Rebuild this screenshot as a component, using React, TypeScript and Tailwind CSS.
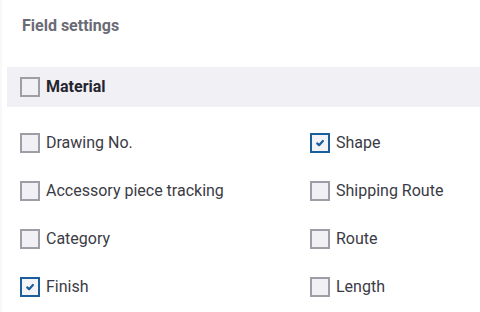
import React from "react";

type Item = { label: string; checked?: boolean };

const left: Item[] = [
  { label: "Drawing No." },
  { label: "Accessory piece tracking" },
  { label: "Category" },
  { label: "Finish", checked: true },
];

const right: Item[] = [
  { label: "Shape", checked: true },
  { label: "Shipping Route" },
  { label: "Route" },
  { label: "Length" },
];

function Box({ checked }: { checked?: boolean }) {
  if (checked) {
    return (
      <span className="flex h-5 w-5 shrink-0 items-center justify-center border-2 border-[#1a5e9e] bg-[#f4f4f8]">
        <svg viewBox="0 0 10 10" className="h-[10px] w-[10px]" fill="none" stroke="#1a5e9e" strokeWidth="2.2" strokeLinecap="round" strokeLinejoin="round">
          <path d="M2.2 5.4l1.9 1.8 3.8-4.2" />
        </svg>
      </span>
    );
  }
  return <span className="block h-5 w-5 shrink-0 border-2 border-[#9e9ea6] bg-[#f0f0f5]" />;
}

function Row({ item }: { item: Item }) {
  return (
    <div className="flex h-12 items-center gap-[6px]">
      <Box checked={item.checked} />
      <span className="text-[16px] text-[#3b3b45]">{item.label}</span>
    </div>
  );
}

export default function App() {
  return (
    <div
      className="h-[312px] w-[480px] overflow-hidden border-l-2 border-[#f8f8f8] bg-white"
      style={{ fontFamily: "Roboto, 'Liberation Sans', sans-serif" }}
    >
      <div className="flex h-[67px] items-start pl-[20px] pt-[14px]">
        <h2 className="text-[16px] font-bold text-[#6b6b75]">Field settings</h2>
      </div>
      <div className="ml-[5px] flex h-10 items-center gap-[6px] bg-[#f1f0f5] pl-[13px]">
        <Box />
        <span className="text-[16px] font-bold text-[#25252f]">Material</span>
      </div>
      <div className="grid grid-cols-[290px_1fr] pl-[18px] pt-[12px]">
        <div className="flex flex-col">
          {left.map((i) => (
            <Row key={i.label} item={i} />
          ))}
        </div>
        <div className="flex flex-col">
          {right.map((i) => (
            <Row key={i.label} item={i} />
          ))}
        </div>
      </div>
    </div>
  );
}
